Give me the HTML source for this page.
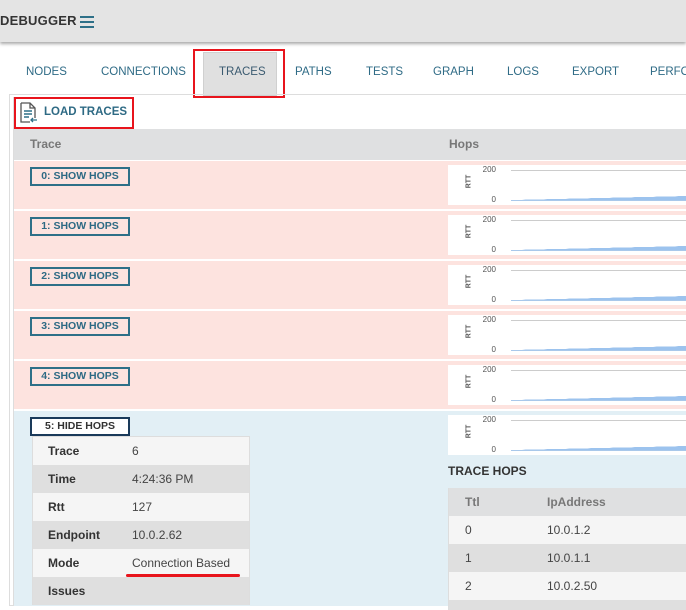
<!DOCTYPE html>
<html><head><style>
*{margin:0;padding:0;box-sizing:border-box}
body{width:686px;height:606px;overflow:hidden;background:#fff;font-family:"Liberation Sans",Arial,sans-serif;position:relative}
.a{position:absolute}
.hdr{left:0;top:0;width:686px;height:42px;background:#e4e4e4;box-shadow:0 2px 3px #aaa}
.tab{top:66px;font-size:11.5px;color:#2f6b86}
.row{left:14px;width:672px;height:48px;background:#fde3df}
.btn{left:30px;width:100px;height:19px;border:2px solid #2e7088;font-size:10.5px;font-weight:bold;color:#2e6a84;text-align:center;line-height:15px}
.ch{left:448px;width:238px;height:40px;background:#fff}
.ch .l{position:absolute;left:63px;right:0;height:1px;background:#ccc}
.ch .y{position:absolute;font-size:8px;color:#555;left:0;width:48px;text-align:right}
.ch .r{position:absolute;left:14px;top:13px;font-size:7px;font-weight:bold;color:#555;transform:rotate(-90deg)}
.ch .f{position:absolute;left:63px;right:0;bottom:5px;height:4px;background:linear-gradient(to bottom right,transparent 50%,#9cc3ee 51%)}
.dt div{height:28px;font-size:12px;color:#444;line-height:28px;padding-left:15px}
.dt b{display:inline-block;width:84px;color:#333}
.ht div{height:28px;font-size:12px;color:#444;line-height:28px;padding-left:16px}
.ht span{display:inline-block;width:82px}
</style></head><body>
<div class="a hdr"></div>
<div class="a" style="left:0;top:13px;font-size:13px;font-weight:bold;color:#333;letter-spacing:0.2px">DEBUGGER</div>
<div class="a" style="left:80px;top:16px;width:14px;height:2px;background:#2e7088;box-shadow:0 5px 0 #2e7088,0 10px 0 #2e7088"></div>
<div class="a" style="left:203px;top:52px;width:74px;height:44px;background:#e0e0e0;border:1px solid #d0d0d0"></div>
<div class="a" style="left:193px;top:49px;width:92px;height:49px;border:2px solid #e8141c"></div>
<div class="a tab" style="left:26px">NODES</div>
<div class="a tab" style="left:101px">CONNECTIONS</div>
<div class="a tab" style="left:219px;color:#3a5a70">TRACES</div>
<div class="a tab" style="left:295px">PATHS</div>
<div class="a tab" style="left:366px">TESTS</div>
<div class="a tab" style="left:433px">GRAPH</div>
<div class="a tab" style="left:507px">LOGS</div>
<div class="a tab" style="left:572px">EXPORT</div>
<div class="a tab" style="left:650px">PERFO</div>
<div class="a" style="left:9px;top:94px;width:677px;height:512px;border:1px solid #ddd;border-right:none"></div>
<div class="a" style="left:13px;top:97px;width:673px;height:509px;border-left:1px solid #ddd"></div>
<svg class="a" style="left:20px;top:102px" width="18" height="22" viewBox="0 0 18 22"><path d="M1 1h9l5 5v10M15 6h-5V1M1 1v19h9" fill="none" stroke="#555" stroke-width="1.3"/><path d="M4 9h8M4 12h8M4 15h5" stroke="#2e7088" stroke-width="1.5"/><path d="M17 18h-6M13 16l-2 2 2 2" fill="none" stroke="#2e7088" stroke-width="1.3"/></svg>
<div class="a" style="left:44px;top:106px;font-size:11.5px;font-weight:bold;color:#2e6a84">LOAD TRACES</div>
<div class="a" style="left:14px;top:97px;width:120px;height:32px;border:2px solid #e8141c"></div>
<div class="a" style="left:14px;top:129px;width:672px;height:31px;background:#dfe0e1"></div>
<div class="a" style="left:30px;top:137px;font-size:12px;font-weight:bold;color:#777">Trace</div>
<div class="a" style="left:449px;top:137px;font-size:12px;font-weight:bold;color:#777">Hops</div>

<div class="a row" style="top:161px"></div>
<div class="a row" style="top:211px"></div>
<div class="a row" style="top:261px"></div>
<div class="a row" style="top:311px"></div>
<div class="a row" style="top:361px"></div>
<div class="a" style="left:14px;top:411px;width:672px;height:195px;background:#e2eff5"></div>

<div class="a btn" style="top:167px">0: SHOW HOPS</div>
<div class="a btn" style="top:217px">1: SHOW HOPS</div>
<div class="a btn" style="top:267px">2: SHOW HOPS</div>
<div class="a btn" style="top:317px">3: SHOW HOPS</div>
<div class="a btn" style="top:367px">4: SHOW HOPS</div>
<div class="a btn" style="top:417px;background:#fff;border-color:#1a3a5a;color:#333">5: HIDE HOPS</div>

<div class="a ch" style="top:165px"><div class="l" style="top:5px"></div><div class="f"></div><div class="l" style="top:35px;background:#a9c8ea"></div><div class="y" style="top:0">200</div><div class="y" style="top:30px">0</div><div class="r">RTT</div></div>
<div class="a ch" style="top:215px"><div class="l" style="top:5px"></div><div class="f"></div><div class="l" style="top:35px;background:#a9c8ea"></div><div class="y" style="top:0">200</div><div class="y" style="top:30px">0</div><div class="r">RTT</div></div>
<div class="a ch" style="top:265px"><div class="l" style="top:5px"></div><div class="f"></div><div class="l" style="top:35px;background:#a9c8ea"></div><div class="y" style="top:0">200</div><div class="y" style="top:30px">0</div><div class="r">RTT</div></div>
<div class="a ch" style="top:315px"><div class="l" style="top:5px"></div><div class="f"></div><div class="l" style="top:35px;background:#a9c8ea"></div><div class="y" style="top:0">200</div><div class="y" style="top:30px">0</div><div class="r">RTT</div></div>
<div class="a ch" style="top:365px"><div class="l" style="top:5px"></div><div class="f"></div><div class="l" style="top:35px;background:#a9c8ea"></div><div class="y" style="top:0">200</div><div class="y" style="top:30px">0</div><div class="r">RTT</div></div>
<div class="a ch" style="top:415px"><div class="l" style="top:5px"></div><div class="f"></div><div class="l" style="top:35px;background:#a9c8ea"></div><div class="y" style="top:0">200</div><div class="y" style="top:30px">0</div><div class="r">RTT</div></div>

<div class="a dt" style="left:32px;top:436px;width:218px;border:1px solid #ddd;border-bottom:none">
<div style="background:#f5f5f5"><b>Trace</b>6</div>
<div style="background:#dfdfdf"><b>Time</b>4:24:36 PM</div>
<div style="background:#f5f5f5"><b>Rtt</b>127</div>
<div style="background:#dfdfdf"><b>Endpoint</b>10.0.2.62</div>
<div style="background:#f5f5f5"><b>Mode</b>Connection Based</div>
<div style="background:#dfdfdf"><b>Issues</b></div>
</div>
<div class="a" style="left:126px;top:574px;width:114px;height:3px;background:#e8141c;border-radius:2px"></div>

<div class="a" style="left:448px;top:464px;font-size:12px;font-weight:bold;color:#333">TRACE HOPS</div>
<div class="a ht" style="left:448px;top:488px;width:238px;border-left:1px solid #ddd">
<div style="background:#dfe0e1;font-weight:bold;color:#777"><span>Ttl</span>IpAddress</div>
<div style="background:#f5f5f5"><span>0</span>10.0.1.2</div>
<div style="background:#dfdfdf"><span>1</span>10.0.1.1</div>
<div style="background:#f5f5f5"><span>2</span>10.0.2.50</div>
<div style="background:#dfdfdf;height:10px"></div>
</div>
</body></html>
